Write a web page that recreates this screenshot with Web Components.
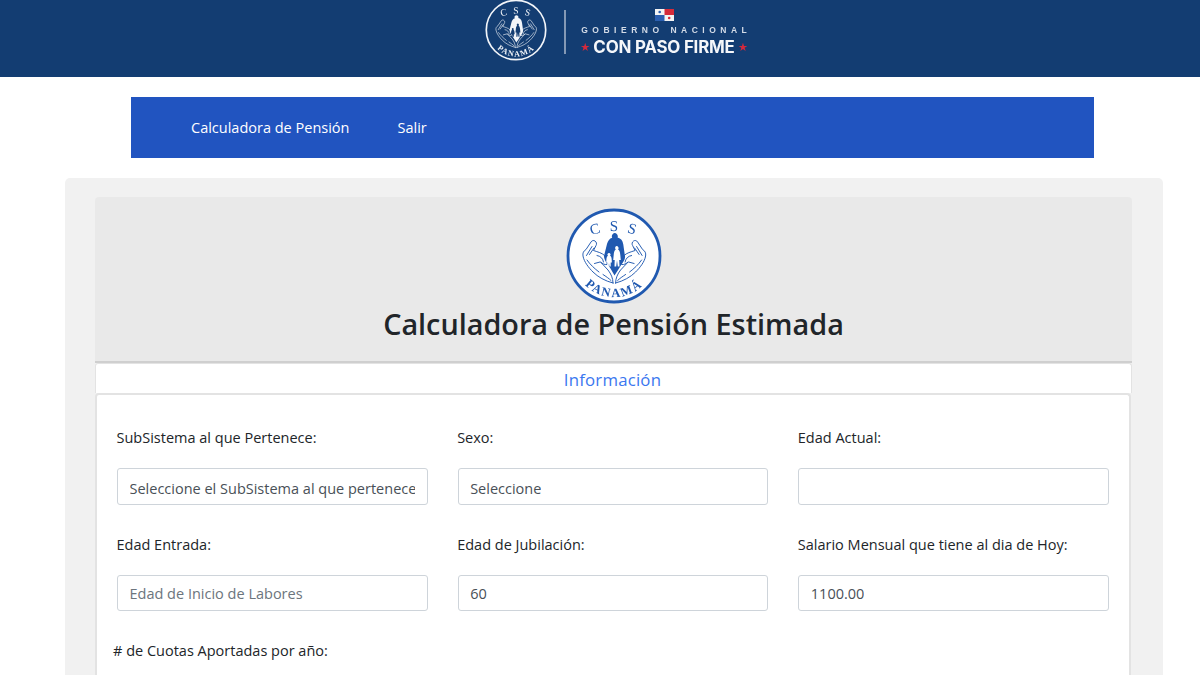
<!DOCTYPE html>
<html lang="es"><head><meta charset="utf-8"><title>Calculadora de Pensión</title>
<style>
html,body{margin:0;height:675px;overflow:hidden;background:#fff}
body{font-family:"Open Sans","Noto Sans",sans-serif;font-size:14.5px;color:#212529}
</style></head><body>
<template id="logo-t">
<style>:host{display:block;line-height:0}svg{display:block;width:100%;height:100%}</style>
<svg viewBox="0 0 96 96" fill="none">
<defs>
<path id="top" d="M16 32Q48 14 80 32"/>
<path id="bot" d="M7 48A41 41 0 0 0 89 48"/>
<g id="hand" stroke-width=".95" stroke-linejoin="round" stroke-linecap="round">
<path d="M47 75C39 73 32 69 27 64C23 60 18 54 17 48C16.500 45 17.500 43 20 41.500L25 34C26 32.500 27.500 32 29 33C30.500 34 31 36 30 37.500L27.500 42.500C32 44 36 45 38.500 47.500C41 50 42 53 41 56.500C38.500 57 36.500 55.500 34.500 54L42 62C45 66 47 70 47 75Z"/>
<path d="M20.500 47.500L26 38.500M23.500 46.500L28 40M21 52C24 56.500 28.500 60.500 33 64M37 66.500C40 68.500 43 70.500 45 72.500M31 47.500C34.500 48 37 50.500 37.500 54M28.500 55.500L34 54"/>
</g>
</defs>
<circle cx="48" cy="48" r="46" fill="var(--bg,#fff)" stroke="var(--c)" stroke-width="var(--ring,2.800)"/>
<text font-family="Liberation Serif,serif" font-size="15" fill="var(--c)"><textPath href="#top" startOffset="49%" text-anchor="middle" style="white-space:pre" letter-spacing=".4">C  S  S</textPath></text>
<text font-family="Liberation Serif,serif" font-size="12.500" font-weight="700" fill="var(--c)" letter-spacing="1.700"><textPath href="#bot" startOffset="50%" text-anchor="middle">PANAMÁ</textPath></text>
<use href="#hand" stroke="var(--c)"/>
<use href="#hand" stroke="var(--c)" transform="translate(96.600 0) scale(-1 1)"/>
<path fill="var(--c)" d="M48.300 25a3.400 3.400 0 0 1 3.300 4.600c3.400.9 5 3 5.700 7l1.700 12c.3 4-4 8-6 12l-4.500 6.800-4-6.800c-2.500-4-6.500-8-6.500-12.500l3-12c1-3.500 2.500-5.500 5.200-6.300a3.400 3.400 0 0 1 2.100-4.800z"/>
<path fill="var(--bg,#fff)" d="M50.500 38a2.100 2.100 0 0 1 1.500 3.500c1.600.8 2 2.500 2.300 5.500l.5 5h-1.600l.3 6.500h-1.700l-.8-6-.8 6h-1.700l.2-6.500h-1.500l.5-5c.2-3 .7-4.700 2.100-5.500a2.100 2.100 0 0 1 .7-3.500z"/>
<path fill="var(--bg,#fff)" d="M43 45a1.600 1.600 0 0 1 1 2.800c1.300.6 1.600 2 1.700 3.800l.2 2.900h-1.200v4h-1.300l-.4-3.500-.4 3.500h-1.300v-4h-1.100l.2-2.900c.1-1.800.5-3.200 1.600-3.800a1.600 1.600 0 0 1 1-2.800z"/>
</svg>
</template>

<template id="head-t">
<style>
:host{display:block;height:77px;background:#133d72;box-sizing:border-box}
.w{display:flex;align-items:flex-start;height:100%;padding-left:485px;box-sizing:border-box}
css-logo{width:62px;height:62px;margin-top:-1px;--c:#f2f5f9;--bg:#133d72;--ring:2.600;filter:blur(.35px)}
.sep{width:2px;height:44px;background:#8499b5;margin:10px 14px 0 17px}
.b{display:flex;flex-direction:column;align-items:center;width:168px;filter:blur(.25px)}
svg{margin-top:9px;display:block}
.g{font:700 8.500px/1 "Liberation Sans",sans-serif;letter-spacing:4.500px;margin-right:-4.500px;color:#d3dbe7;white-space:nowrap;margin-top:5px}
.c{display:flex;align-items:center;justify-content:space-between;width:100%;margin-top:4px;font:700 16.900px/1 Inter,"Liberation Sans",sans-serif;color:#f5f7fa;white-space:nowrap;letter-spacing:-.2px}
.s{color:#d3293c;font-size:10px}
</style>
<div class="w">
<css-logo></css-logo><div class="sep"></div>
<div class="b">
<svg width="19" height="12" viewBox="0 0 19 12"><rect width="19" height="12" fill="#f4f4f4"/><rect x="9.500" width="9.500" height="6" fill="#d52b3a"/><rect y="6" width="9.500" height="6" fill="#2b5fb0"/><circle cx="4.700" cy="3" r="1.300" fill="#2b5fb0"/><circle cx="14.200" cy="9" r="1.300" fill="#d52b3a"/></svg>
<div class="g">GOBIERNO NACIONAL</div>
<div class="c"><span class="s">★</span><span>CON PASO FIRME</span><span class="s">★</span></div>
</div></div>
</template>

<template id="nav-t">
<style>
:host{display:block;margin:20px 106px 20px 131px;height:61px;background:#2154c0;color:#fff;font-size:14.500px}
nav{display:flex;align-items:center;gap:48px;height:100%;padding-left:60px}
span{white-space:nowrap}
</style>
<nav><span>Calculadora de Pensión</span><span>Salir</span></nav>
</template>

<template id="panel-t">
<style>
:host{display:block;margin:0 37px 0 65px;padding:19px 31px 0 30px;background:#f1f1f1;border-radius:5px 5px 0 0;height:497px;box-sizing:border-box}
.h{background:#e9e9e9;border-bottom:2px solid #cfcfcf;border-radius:4px 4px 0 0;height:166px;box-sizing:border-box;display:flex;flex-direction:column;align-items:center;padding-top:11px}
css-logo{width:96px;height:96px;--c:#2059b0;--bg:#fff;filter:blur(.25px)}
h1{margin:1px 0 0;font-size:28.800px;font-weight:600;line-height:38px;color:#212529;white-space:nowrap}
.tab{background:#fff;border:1px solid #e3e3e3;border-bottom:0;border-radius:3px 3px 0 0;height:30px;box-sizing:border-box;text-align:center;color:#3b77f0;font-size:16.800px;line-height:32px;letter-spacing:.2px;padding-right:2px}
.card{margin-right:1px;background:#fff;border:2px solid #e3e3e3;border-bottom:0;border-radius:4px 4px 0 0;height:300px;box-sizing:border-box;padding:32px 20px 0 20px}
.g{display:grid;grid-template-columns:repeat(3,310.670px);column-gap:30px;row-gap:11px}
.q{margin:10px 0 0 -4px;line-height:21px;white-space:nowrap}
</style>
<div class="h"><css-logo></css-logo><h1>Calculadora de Pensión Estimada</h1></div>
<div class="tab">Información</div>
<div class="card">
<div class="g"><slot></slot></div>
<div class="q"># de Cuotas Aportadas por año:</div>
</div>
</template>

<template id="field-t">
<style>
:host{display:block;height:96px}
label{display:block;line-height:21px;margin-bottom:20px;margin-left:-.5px;white-space:nowrap;font-size:14.500px;color:#212529}
.i{height:36px;box-sizing:border-box;border:1px solid #ced4da;border-radius:3px;padding:0 11.500px;display:flex;align-items:center;background:#fff;color:#495057;font-size:14.500px;overflow:hidden;white-space:nowrap}
:host([tall]) .i{height:37px;padding-top:3px}
.i span{display:block;overflow:hidden}
.ph{color:#6c757d}
</style>
<label></label><div class="i"><span></span></div>
</template>

<script>
function mk(name,tid,extra){
  customElements.define(name,class extends HTMLElement{
    constructor(){super();this.attachShadow({mode:'open'}).appendChild(document.getElementById(tid).content.cloneNode(true));}
    connectedCallback(){extra&&extra.call(this)}
  });
}
mk('css-logo','logo-t');
mk('gov-header','head-t');
mk('main-nav','nav-t');
mk('calc-panel','panel-t');
mk('form-field','field-t',function(){
  const s=this.shadowRoot;
  s.querySelector('label').textContent=this.getAttribute('label');
  const v=s.querySelector('.i span');
  v.textContent=this.getAttribute('value')||'';
  if(this.hasAttribute('ph'))v.className='ph';
});
</script>

<gov-header></gov-header>
<main-nav></main-nav>
<calc-panel>
<form-field tall label="SubSistema al que Pertenece:" value="Seleccione el SubSistema al que pertenece"></form-field>
<form-field tall label="Sexo:" value="Seleccione"></form-field>
<form-field tall label="Edad Actual:"></form-field>
<form-field label="Edad Entrada:" value="Edad de Inicio de Labores" ph></form-field>
<form-field label="Edad de Jubilación:" value="60"></form-field>
<form-field label="Salario Mensual que tiene al dia de Hoy:" value="1100.00"></form-field>
</calc-panel>
</body></html>
